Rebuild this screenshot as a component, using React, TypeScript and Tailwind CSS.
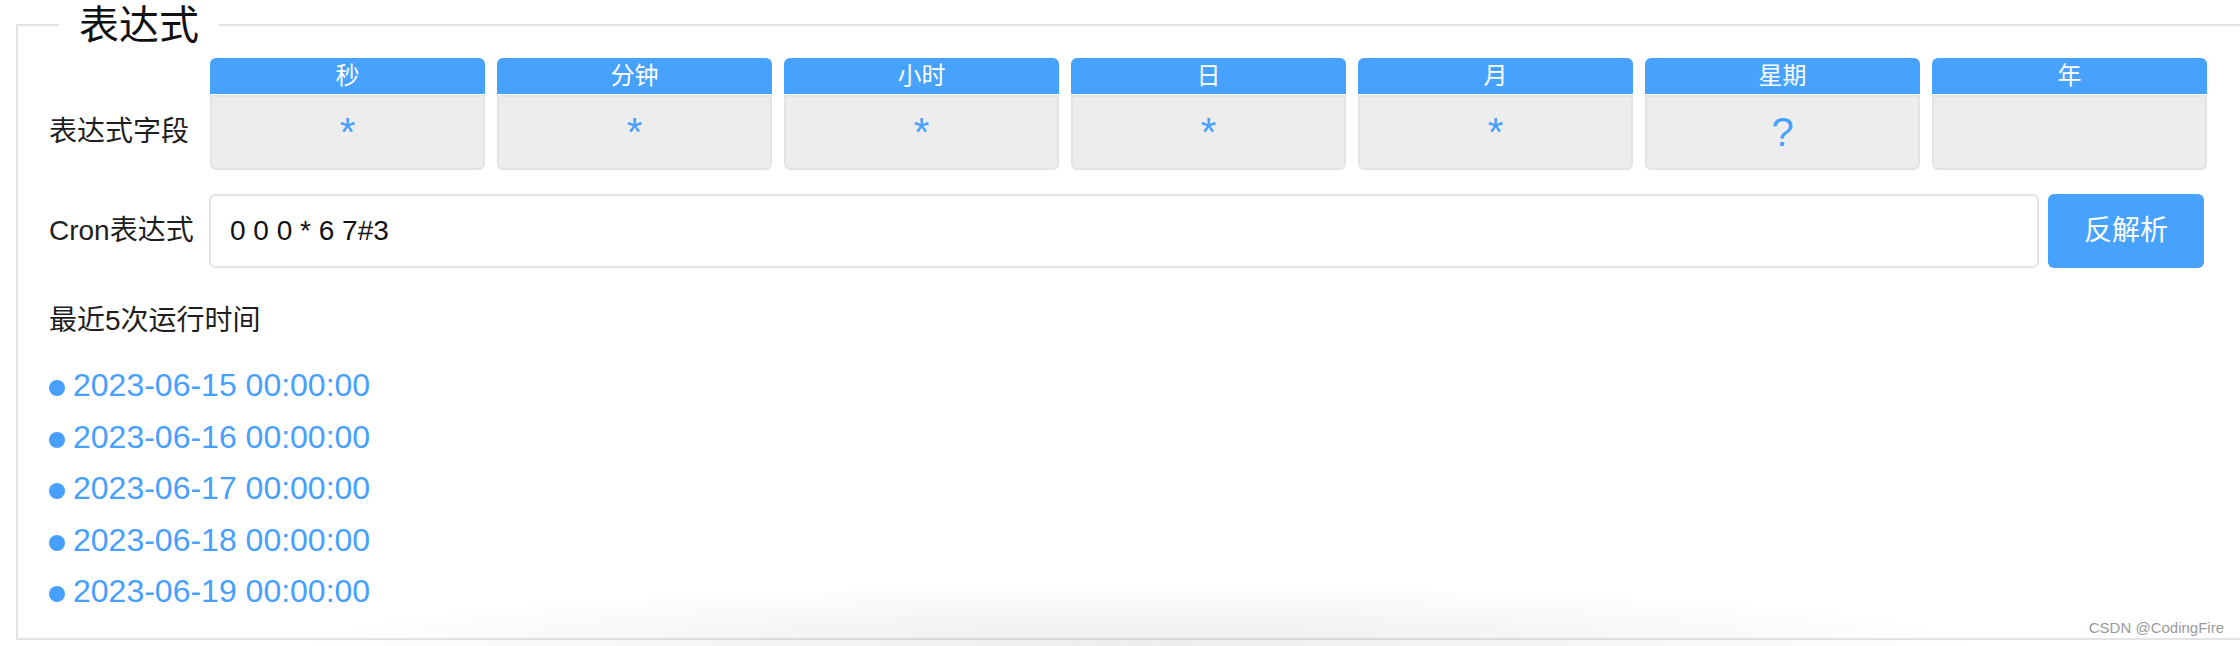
import React from 'react';

const fields = [
  { name: '秒', value: '*' },
  { name: '分钟', value: '*' },
  { name: '小时', value: '*' },
  { name: '日', value: '*' },
  { name: '月', value: '*' },
  { name: '星期', value: '?' },
  { name: '年', value: '' },
];

const runTimes = [
  '2023-06-15 00:00:00',
  '2023-06-16 00:00:00',
  '2023-06-17 00:00:00',
  '2023-06-18 00:00:00',
  '2023-06-19 00:00:00',
];

const font = "font-['Liberation_Sans','Noto_Sans_CJK_SC',sans-serif]";

export default function App() {
  return (
    <div className={`relative w-[2240px] h-[646px] overflow-hidden bg-white text-[#1e1e1e] ${font}`}>
      <fieldset className="ml-4 w-[2260px] h-[640px] border-2 border-[#e4e4e4] pl-[31px] pt-2">
        <legend className="ml-[10px] px-5 text-[40px] leading-[50px] text-[#111]">表达式</legend>

        {/* expression fields */}
        <div className="flex">
          <div className="w-[161px] shrink-0 pt-[37px] h-[111px] flex items-center text-[28px] leading-[36px]">
            表达式字段
          </div>
          <div className="grid grid-cols-7 gap-3 w-[1997px]">
            {fields.map((f) => (
              <div key={f.name} className="flex flex-col">
                <div className="h-[36px] rounded-t-md bg-[#47a2fd] text-white text-[24px] leading-[36px] text-center">
                  {f.name}
                </div>
                <div className="mt-px h-[75px] rounded-b-md border-2 border-[#e3e3e3] bg-[#ededed] pt-[12px] text-center text-[40px] leading-[46px] text-[#46a0fc]">
                  {f.value}
                </div>
              </div>
            ))}
          </div>
        </div>

        {/* cron input */}
        <div className="mt-6 flex items-center w-[2155px] h-[74px]">
          <div className="w-[160px] shrink-0 text-[28px] leading-[36px]">Cron表达式</div>
          <div className="flex-1 h-full rounded-md border-2 border-[#e4e4e4] bg-white px-[19px] flex items-center text-[28px] text-[#111]">
            0 0 0 * 6 7#3
          </div>
          <button className="ml-[9px] w-[156px] h-full rounded-md bg-[#47a2fd] text-white text-[28px]">
            反解析
          </button>
        </div>

        {/* recent run times */}
        <div className="mt-[33px] text-[28px] leading-[40px]">最近5次运行时间</div>
        <ul className="mt-[19px]">
          {runTimes.map((t) => (
            <li key={t} className="text-[32px] leading-[51.5px] text-[#46a0fc]">
              <span className="inline-block w-4 h-4 mr-2 rounded-full bg-[#46a0fc]" />
              {t}
            </li>
          ))}
        </ul>
      </fieldset>

      {/* soft shadow at the bottom */}
      <div className="pointer-events-none absolute left-[300px] right-[260px] top-[585px] bottom-0 bg-[radial-gradient(ellipse_at_50%_100%,rgba(0,0,0,0.07),rgba(0,0,0,0.02)_55%,rgba(0,0,0,0)_72%)]" />

      <div className="absolute right-4 bottom-[11px] text-[15px] leading-[15px] text-[#9a9a9a]">
        CSDN @CodingFire
      </div>
    </div>
  );
}
